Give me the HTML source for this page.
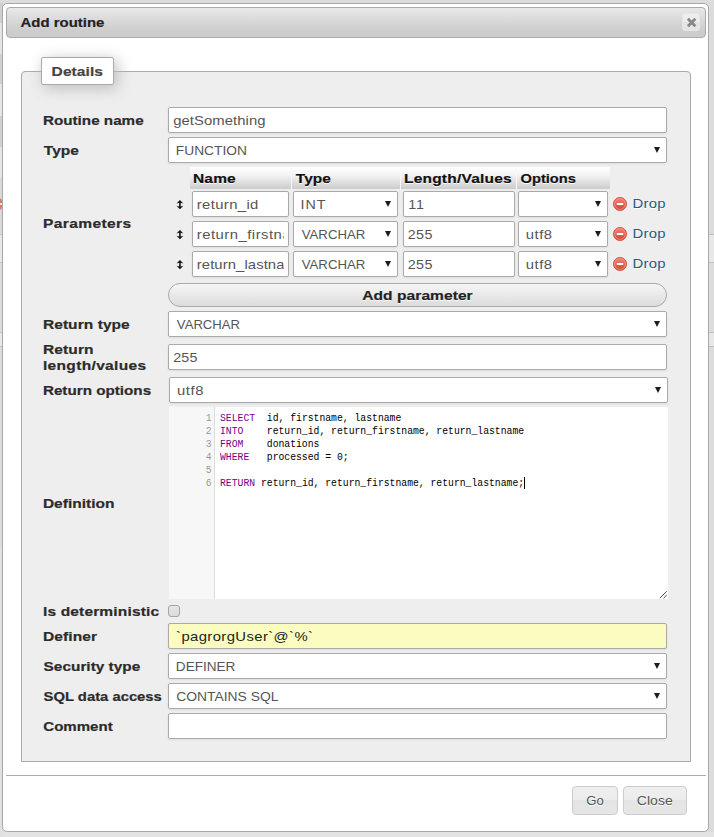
<!DOCTYPE html>
<html>
<head>
<meta charset="utf-8">
<title>Add routine</title>
<style>
*{box-sizing:border-box;margin:0;padding:0}
html,body{width:714px;height:837px;overflow:hidden;background:#dcdcdc}
body{font-family:"Liberation Sans",sans-serif;font-size:13px;color:#444;position:relative}
#stage{position:absolute;left:0;top:0;width:714px;height:837px;overflow:hidden;background:#dcdcdc}
#stage>*{position:absolute}
.t{white-space:nowrap;line-height:16px;transform-origin:0 0}
#dialog{left:2px;top:3px;width:707px;height:829px;background:#fff;border:1px solid #a8a8a8;border-radius:5px}
#titlebar{left:6px;top:7px;width:700px;height:31px;border:1px solid #aaa;border-radius:4px;
 background:linear-gradient(to bottom,#e8e8e8 0%,#d8d8d8 45%,#cccccc 82%,#cccccc 100%)}
#closebtn{left:682px;top:13px;width:18px;height:18px;border-radius:3px;border:1px solid #e6e6e6;background:linear-gradient(#eeeeee 0%,#ececec 50%,#e4e4e4 50%,#e6e6e6 100%)}
#fieldset{left:21px;top:71px;width:670px;height:691px;background:#eee;border:1px solid #aaa;border-radius:4px 4px 0 0}
#legend{left:41px;top:57px;width:73px;height:28px;background:#fff;border:1px solid #aaa;border-radius:2px;box-shadow:3px 3px 15px #bbb}
.inp{background:#fff;border:1px solid #aaa;border-radius:2px;box-shadow:0 1px 2px #ddd;height:26px}
.sel{background:#fff;border:1px solid #aaa;border-radius:2px;box-shadow:0 1px 2px #ddd;height:26px}
.arrow{width:0;height:0;border-left:3.4px solid transparent;border-right:3.4px solid transparent;border-top:6.4px solid #1c1c1c}
.th{top:167px;height:22px;background:linear-gradient(#ffffff 0%,#f4f4f4 35%,#cccccc 100%)}
.btn{border:1px solid #ccc;border-radius:4px;background:linear-gradient(#efefef 0%,#ececec 50%,#e4e4e4 50%,#e6e6e6 100%)}
.mono{font-family:"Liberation Mono",monospace;font-size:10.6px;line-height:13px;white-space:pre;color:#000;transform:scaleX(.9198);transform-origin:0 0}
.kw{color:#708}
.ln{color:#999;text-align:right;transform-origin:100% 0}

</style>
</head>
<body>
<div id="stage">
<div style="left:0;top:832px;width:714px;height:5px;background:#e3e3e3"></div>
<div style="left:0;top:3px;width:3px;height:834px;background:linear-gradient(to bottom,#cfcfcf 0px,#cfcfcf 20px,#e4e4e4 20px,#e4e4e4 51px,#d0d0d0 51px,#d0d0d0 81px,#e6e6e6 81px,#e6e6e6 113px,#d0d0d0 113px,#d0d0d0 144px,#e6e6e6 144px,#e6e6e6 175px,#dadada 175px,#dadada 231px,#e7e7e7 231px,#e7e7e7 259px,#dcdcdc 259px,#dcdcdc 329px,#e8e8e8 329px,#e8e8e8 343px,#dcdcdc 343px,#dcdcdc 544px,#e0e0e0 544px,#e0e0e0 834px)"></div>
<div style="left:-5px;top:198px;width:7px;height:12px;border-radius:6px;background:#e4746a"></div>
<div style="left:0;top:203px;width:1.5px;height:2px;background:#fbe9e6"></div>
<div style="left:0;top:234px;width:3px;height:1px;background:#c6c6c6"></div>
<div style="left:709px;top:234px;width:5px;height:1px;background:#c0c0c0"></div>
<div style="left:0;top:262px;width:3px;height:1px;background:#c6c6c6"></div>
<div style="left:709px;top:262px;width:5px;height:1px;background:#c0c0c0"></div>
<div style="left:0;top:332px;width:3px;height:1px;background:#c6c6c6"></div>
<div style="left:709px;top:332px;width:5px;height:1px;background:#c0c0c0"></div>
<div style="left:0;top:346px;width:3px;height:1px;background:#c6c6c6"></div>
<div style="left:709px;top:346px;width:5px;height:1px;background:#c0c0c0"></div>
<div style="left:709px;top:235px;width:5px;height:27px;background:#e8e8e8"></div>
<div style="left:709px;top:333px;width:5px;height:13px;background:#e8e8e8"></div>
<div id="dialog"></div>
<div id="titlebar"></div>
<div id="closebtn"></div>
<svg style="left:685px;top:16px" width="13" height="13" viewBox="0 0 13 13"><path d="M2.9 2.8 L10.4 10.3 M10.4 2.8 L2.9 10.3" stroke="#888" stroke-width="2.9" stroke-linecap="butt"/></svg>

<div id="fieldset"></div>
<div id="legend"></div>

<!-- Routine name / Type -->
<div class="inp" style="left:168px;top:107px;width:499px"></div>
<div class="sel" style="left:168px;top:137px;width:499px"></div>
<div class="arrow" style="left:653.6px;top:147px"></div>

<!-- Parameters table header -->
<div class="th" style="left:190px;width:101px"></div>
<div class="th" style="left:292px;width:108px"></div>
<div class="th" style="left:401px;width:115px"></div>
<div class="th" style="left:517px;width:93px"></div>

<div style="left:291px;top:167px;width:1px;height:22px;background:#f7f7f7"></div>
<div style="left:400px;top:167px;width:1px;height:22px;background:#f7f7f7"></div>
<div style="left:516px;top:167px;width:1px;height:22px;background:#f7f7f7"></div>
<!-- rows -->
<svg style="left:176px;top:199px" width="9" height="12" viewBox="0 0 9 12"><path d="M3.95 1.0 L7.4 4.5 L4.75 3.8 L4.75 7.4 L7.4 6.7 L3.95 10.2 L0.5 6.7 L3.15 7.4 L3.15 3.8 L0.5 4.5 Z" fill="#111"/></svg>
<div class="inp" style="left:192px;top:191px;width:97px"></div>
<div class="sel" style="left:293px;top:191px;width:105px"></div>
<div class="arrow" style="left:384.75px;top:201px"></div>
<div class="inp" style="left:403px;top:191px;width:112px"></div>
<div class="sel" style="left:518px;top:191px;width:90px"></div>
<div class="arrow" style="left:594.6px;top:201px"></div>
<div style="left:613px;top:197px;width:14px;height:14px;border-radius:7px;border:1px solid #d4493c;background:linear-gradient(#f08378,#d8422e)"></div>
<svg style="left:612px;top:196px" width="16" height="16" viewBox="0 0 16 16"><circle cx="8" cy="8" r="5.4" fill="none" stroke="#f3a59b" stroke-width=".8" opacity=".8"/><rect x="4.8" y="6.9" width="6.4" height="2.2" rx=".4" fill="#fff"/></svg>
<svg style="left:176px;top:229px" width="9" height="12" viewBox="0 0 9 12"><path d="M3.95 1.0 L7.4 4.5 L4.75 3.8 L4.75 7.4 L7.4 6.7 L3.95 10.2 L0.5 6.7 L3.15 7.4 L3.15 3.8 L0.5 4.5 Z" fill="#111"/></svg>
<div class="inp" style="left:192px;top:221px;width:97px"></div>
<div class="sel" style="left:293px;top:221px;width:105px"></div>
<div class="arrow" style="left:384.75px;top:231px"></div>
<div class="inp" style="left:403px;top:221px;width:112px"></div>
<div class="sel" style="left:518px;top:221px;width:90px"></div>
<div class="arrow" style="left:594.6px;top:231px"></div>
<div style="left:613px;top:227px;width:14px;height:14px;border-radius:7px;border:1px solid #d4493c;background:linear-gradient(#f08378,#d8422e)"></div>
<svg style="left:612px;top:226px" width="16" height="16" viewBox="0 0 16 16"><circle cx="8" cy="8" r="5.4" fill="none" stroke="#f3a59b" stroke-width=".8" opacity=".8"/><rect x="4.8" y="6.9" width="6.4" height="2.2" rx=".4" fill="#fff"/></svg>
<svg style="left:176px;top:259px" width="9" height="12" viewBox="0 0 9 12"><path d="M3.95 1.0 L7.4 4.5 L4.75 3.8 L4.75 7.4 L7.4 6.7 L3.95 10.2 L0.5 6.7 L3.15 7.4 L3.15 3.8 L0.5 4.5 Z" fill="#111"/></svg>
<div class="inp" style="left:192px;top:251px;width:97px"></div>
<div class="sel" style="left:293px;top:251px;width:105px"></div>
<div class="arrow" style="left:384.75px;top:261px"></div>
<div class="inp" style="left:403px;top:251px;width:112px"></div>
<div class="sel" style="left:518px;top:251px;width:90px"></div>
<div class="arrow" style="left:594.6px;top:261px"></div>
<div style="left:613px;top:257px;width:14px;height:14px;border-radius:7px;border:1px solid #d4493c;background:linear-gradient(#f08378,#d8422e)"></div>
<svg style="left:612px;top:256px" width="16" height="16" viewBox="0 0 16 16"><circle cx="8" cy="8" r="5.4" fill="none" stroke="#f3a59b" stroke-width=".8" opacity=".8"/><rect x="4.8" y="6.9" width="6.4" height="2.2" rx=".4" fill="#fff"/></svg>

<!-- Add parameter -->
<div style="left:168px;top:283px;width:499px;height:24px;border:1px solid #aaa;border-radius:12px;background:linear-gradient(#f6f6f6,#dcdcdc)"></div>

<!-- Return type / length / options -->
<div class="sel" style="left:168px;top:311px;width:499px"></div>
<div class="arrow" style="left:653.6px;top:321px"></div>
<div class="inp" style="left:168px;top:344px;width:499px"></div>
<div class="sel" style="left:169px;top:377px;width:499px"></div>
<div class="arrow" style="left:654.6px;top:387px"></div>

<!-- Definition (CodeMirror) -->
<div style="left:169px;top:407px;width:499px;height:192px;background:#fff"></div>
<div style="left:169px;top:407px;width:46px;height:192px;background:#f7f7f7;border-right:1px solid #ddd"></div>
<div class="mono ln" style="left:169px;top:411.6px;width:42.5px">1
2
3
4
5
6</div>
<div class="mono" style="left:219.9px;top:411.6px"><span class="kw">SELECT</span>  id, firstname, lastname
<span class="kw">INTO</span>    return_id, return_firstname, return_lastname
<span class="kw">FROM</span>    donations
<span class="kw">WHERE</span>   processed = 0;

<span class="kw">RETURN</span> return_id, return_firstname, return_lastname;</div>
<div style="left:524px;top:477px;width:1px;height:12px;background:#000"></div>
<svg style="left:658px;top:589px" width="10" height="10" viewBox="0 0 10 10"><path d="M1.8 9.2 L8.8 2.2 M5.6 9.2 L8.8 6" stroke="#4a4a4a" stroke-width="1" fill="none"/></svg>

<!-- Is deterministic -->
<div style="left:168px;top:605px;width:12px;height:12px;border:1px solid #a6a6a6;border-radius:3px;background:linear-gradient(#e6e6e6,#dadada)"></div>

<!-- Definer / Security / SQL / Comment -->
<div class="inp" style="left:168px;top:623px;width:499px;background:#fbfcbf"></div>
<div class="sel" style="left:168px;top:653px;width:499px"></div>
<div class="arrow" style="left:653.6px;top:663px"></div>
<div class="sel" style="left:168px;top:683px;width:499px"></div>
<div class="arrow" style="left:653.6px;top:693px"></div>
<div class="inp" style="left:168px;top:713px;width:499px"></div>

<!-- button pane -->
<div style="left:6px;top:775px;width:700px;height:1px;background:#aaa"></div>
<div class="btn" style="left:572px;top:786px;width:46px;height:29px"></div>
<div class="btn" style="left:623px;top:786px;width:64px;height:29px"></div>

<div class="t" style="left:20px;top:15px;font-size:13.5px;color:#222;transform:translateX(0.59px) scaleX(1.1052);font-weight:bold;-webkit-text-stroke:0.2px #222">Add routine</div>
<div class="t" style="left:51px;top:64px;font-size:13.5px;color:#444;transform:translateX(0.59px) scaleX(1.1500);letter-spacing:0.071px;font-weight:bold;-webkit-text-stroke:0.2px #444">Details</div>
<div class="t" style="left:42px;top:113px;font-size:13.5px;color:#2b2b2b;transform:translateX(0.92px) scaleX(1.1281);font-weight:bold;-webkit-text-stroke:0.2px #2b2b2b">Routine name</div>
<div class="t" style="left:43px;top:143px;font-size:13.5px;color:#2b2b2b;transform:translateX(0.85px) scaleX(1.1441);font-weight:bold;-webkit-text-stroke:0.2px #2b2b2b">Type</div>
<div class="t" style="left:42px;top:216px;font-size:13.5px;color:#2b2b2b;transform:translateX(0.92px) scaleX(1.1500);letter-spacing:0.352px;font-weight:bold;-webkit-text-stroke:0.2px #2b2b2b">Parameters</div>
<div class="t" style="left:42px;top:317px;font-size:13.5px;color:#2b2b2b;transform:translateX(0.92px) scaleX(1.1500);letter-spacing:0.050px;font-weight:bold;-webkit-text-stroke:0.2px #2b2b2b">Return type</div>
<div class="t" style="left:42px;top:342px;font-size:13.5px;color:#2b2b2b;transform:translateX(0.92px) scaleX(1.1500);letter-spacing:0.102px;font-weight:bold;-webkit-text-stroke:0.2px #2b2b2b">Return</div>
<div class="t" style="left:42px;top:358px;font-size:13.5px;color:#2b2b2b;transform:translateX(0.92px) scaleX(1.1500);letter-spacing:0.292px;font-weight:bold;-webkit-text-stroke:0.2px #2b2b2b">length/values</div>
<div class="t" style="left:42px;top:383px;font-size:13.5px;color:#2b2b2b;transform:translateX(0.92px) scaleX(1.1273);font-weight:bold;-webkit-text-stroke:0.2px #2b2b2b">Return options</div>
<div class="t" style="left:42px;top:496px;font-size:13.5px;color:#2b2b2b;transform:translateX(0.92px) scaleX(1.1484);font-weight:bold;-webkit-text-stroke:0.2px #2b2b2b">Definition</div>
<div class="t" style="left:42px;top:604px;font-size:13.5px;color:#2b2b2b;transform:translateX(0.92px) scaleX(1.1500);letter-spacing:0.133px;font-weight:bold;-webkit-text-stroke:0.2px #2b2b2b">Is deterministic</div>
<div class="t" style="left:42px;top:629px;font-size:13.5px;color:#2b2b2b;transform:translateX(0.92px) scaleX(1.1500);letter-spacing:0.105px;font-weight:bold;-webkit-text-stroke:0.2px #2b2b2b">Definer</div>
<div class="t" style="left:43px;top:659px;font-size:13.5px;color:#2b2b2b;transform:translateX(0.59px) scaleX(1.1402);font-weight:bold;-webkit-text-stroke:0.2px #2b2b2b">Security type</div>
<div class="t" style="left:43px;top:689px;font-size:13.5px;color:#2b2b2b;transform:translateX(0.59px) scaleX(1.0965);font-weight:bold;-webkit-text-stroke:0.2px #2b2b2b">SQL data access</div>
<div class="t" style="left:43px;top:719px;font-size:13.5px;color:#2b2b2b;transform:translateX(0.32px) scaleX(1.1139);font-weight:bold;-webkit-text-stroke:0.2px #2b2b2b">Comment</div>
<div class="t" style="left:192px;top:171px;font-size:13.5px;color:#111;transform:translateX(0.92px) scaleX(1.1500);letter-spacing:0.159px;font-weight:bold;-webkit-text-stroke:0.2px #111;text-shadow:0 1px 0 #fff">Name</div>
<div class="t" style="left:295px;top:171px;font-size:13.5px;color:#111;transform:translateX(0.87px) scaleX(1.1435);font-weight:bold;-webkit-text-stroke:0.2px #111;text-shadow:0 1px 0 #fff">Type</div>
<div class="t" style="left:403px;top:171px;font-size:13.5px;color:#111;transform:translateX(0.94px) scaleX(1.1500);letter-spacing:0.179px;font-weight:bold;-webkit-text-stroke:0.2px #111;text-shadow:0 1px 0 #fff">Length/Values</div>
<div class="t" style="left:520px;top:171px;font-size:13.5px;color:#111;transform:translateX(0.49px) scaleX(1.0877);font-weight:bold;-webkit-text-stroke:0.2px #111;text-shadow:0 1px 0 #fff">Options</div>
<div class="t" style="left:362px;top:288px;font-size:13.5px;color:#222;transform:translateX(0.26px) scaleX(1.1500);letter-spacing:0.058px;font-weight:bold;-webkit-text-stroke:0.2px #222;text-shadow:0 1px 0 #fff">Add parameter</div>
<div class="t" style="left:173px;top:113px;font-size:13.5px;color:#555;transform:translateX(0.17px) scaleX(1.1000);letter-spacing:0.057px">getSomething</div>
<div class="t" style="left:175px;top:143px;font-size:13px;color:#555;transform:translateX(0.81px) scaleX(1.0594)">FUNCTION</div>
<div class="t" style="left:196px;top:197px;font-size:13.5px;color:#555;transform:translateX(0.77px) scaleX(1.1000);letter-spacing:0.337px">return_id</div>
<div class="t" style="left:300px;top:197px;font-size:13px;color:#555;transform:translateX(0.49px) scaleX(1.1000);letter-spacing:0.852px">INT</div>
<div class="t" style="left:408px;top:197px;font-size:13px;color:#555;transform:translateX(0.31px) scaleX(1.1000);letter-spacing:0.668px">11</div>
<div class="t" style="left:632px;top:196px;font-size:13.5px;color:#235a81;transform:translateX(0.62px) scaleX(1.1000);letter-spacing:0.193px;text-shadow:0 1px 0 #fff">Drop</div>
<div class="t" style="left:196px;top:227px;font-size:13.5px;color:#555;transform:translateX(0.77px) scaleX(1.1000);letter-spacing:0.444px;width:79.30px;overflow:hidden">return_firstname</div>
<div class="t" style="left:301px;top:227px;font-size:13px;color:#555;transform:translateX(0.72px) scaleX(1.0168)">VARCHAR</div>
<div class="t" style="left:407px;top:227px;font-size:13px;color:#555;transform:translateX(0.71px) scaleX(1.1000);letter-spacing:0.373px">255</div>
<div class="t" style="left:525px;top:227px;font-size:13.5px;color:#555;transform:translateX(0.77px) scaleX(1.1000);letter-spacing:0.474px">utf8</div>
<div class="t" style="left:632px;top:226px;font-size:13.5px;color:#235a81;transform:translateX(0.62px) scaleX(1.1000);letter-spacing:0.193px;text-shadow:0 1px 0 #fff">Drop</div>
<div class="t" style="left:196px;top:257px;font-size:13.5px;color:#555;transform:translateX(0.77px) scaleX(1.1000);letter-spacing:0.077px;width:79.30px;overflow:hidden">return_lastname</div>
<div class="t" style="left:301px;top:257px;font-size:13px;color:#555;transform:translateX(0.72px) scaleX(1.0168)">VARCHAR</div>
<div class="t" style="left:407px;top:257px;font-size:13px;color:#555;transform:translateX(0.71px) scaleX(1.1000);letter-spacing:0.373px">255</div>
<div class="t" style="left:525px;top:257px;font-size:13.5px;color:#555;transform:translateX(0.77px) scaleX(1.1000);letter-spacing:0.474px">utf8</div>
<div class="t" style="left:632px;top:256px;font-size:13.5px;color:#235a81;transform:translateX(0.62px) scaleX(1.1000);letter-spacing:0.193px;text-shadow:0 1px 0 #fff">Drop</div>
<div class="t" style="left:176px;top:317px;font-size:13px;color:#555;transform:translateX(0.87px) scaleX(1.0091)">VARCHAR</div>
<div class="t" style="left:173px;top:350px;font-size:13px;color:#555;transform:translateX(0.21px) scaleX(1.1000);letter-spacing:0.146px">255</div>
<div class="t" style="left:176px;top:383px;font-size:13.5px;color:#555;transform:translateX(0.92px) scaleX(1.1000);letter-spacing:0.573px">utf8</div>
<div class="t" style="left:176px;top:629px;font-size:13.5px;color:#222;transform:translateX(0.07px) scaleX(1.1000);letter-spacing:0.358px">`pagrorgUser`@`%`</div>
<div class="t" style="left:175px;top:659px;font-size:13px;color:#555;transform:translateX(0.83px) scaleX(1.0441)">DEFINER</div>
<div class="t" style="left:176px;top:689px;font-size:13px;color:#555;transform:translateX(0.21px) scaleX(1.0668)">CONTAINS SQL</div>
<div class="t" style="left:586px;top:793px;font-size:13.5px;color:#555;transform:translateX(0.19px) scaleX(0.9729);text-shadow:0 1px 0 #fff">Go</div>
<div class="t" style="left:636px;top:793px;font-size:13.5px;color:#555;transform:translateX(0.86px) scaleX(1.0396);text-shadow:0 1px 0 #fff">Close</div>
</div>
</body>
</html>
